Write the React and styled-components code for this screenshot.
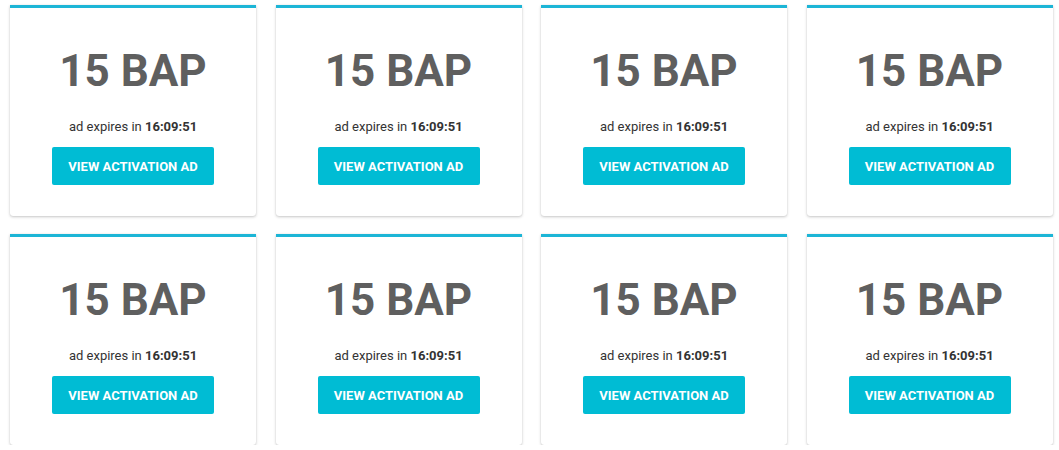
import React from 'react';
import styled, { createGlobalStyle } from 'styled-components';

const GlobalStyle = createGlobalStyle`
  body {
    margin: 0;
    background: #ffffff;
    font-family: Roboto, "Liberation Sans", Arial, sans-serif;
  }
`;

const Grid = styled.div`
  display: grid;
  grid-template-columns: repeat(4, 1fr);
  column-gap: 19.5px;
  row-gap: 18px;
  padding: 5px 6.5px 0 10px;
`;

const Card = styled.div`
  height: 211px;
  box-sizing: border-box;
  background: #fff;
  border-top: 3px solid #1cb5d6;
  border-radius: 0 0 3px 3px;
  box-shadow: 0 1px 3px rgba(0, 0, 0, 0.22), 0 0 1px rgba(0, 0, 0, 0.12);
  display: flex;
  flex-direction: column;
  align-items: center;
`;

const Amount = styled.div`
  margin-top: 35px;
  font-size: 44px;
  font-weight: 700;
  line-height: 56px;
  color: #5f5f5f;
`;

const Expires = styled.div`
  margin-top: 20px;
  font-size: 13px;
  line-height: 16px;
  color: #333;
  b {
    font-weight: 700;
  }
`;

const Button = styled.button`
  margin-top: 12px;
  width: 162px;
  height: 38px;
  border: none;
  border-radius: 2px;
  background: #00bcd4;
  color: #fff;
  font-family: inherit;
  font-size: 13px;
  font-weight: 700;
  text-transform: uppercase;
  cursor: pointer;
`;

const ads = Array.from({ length: 8 }, (_, i) => ({ id: i, amount: '15 BAP', time: '16:09:51' }));

export default function App() {
  return (
    <>
      <GlobalStyle />
      <Grid>
        {ads.map((ad) => (
          <Card key={ad.id}>
            <Amount>{ad.amount}</Amount>
            <Expires>
              ad expires in <b>{ad.time}</b>
            </Expires>
            <Button>View activation ad</Button>
          </Card>
        ))}
      </Grid>
    </>
  );
}
